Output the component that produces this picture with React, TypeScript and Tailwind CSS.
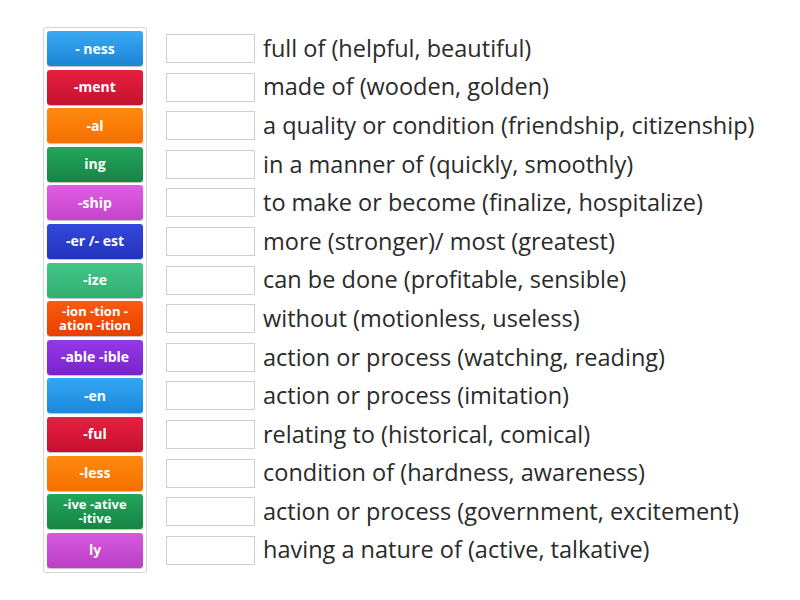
import React from "react";

type Row = { label: string[]; text: string };

const rows: Row[] = [
  { label: ["- ness"], text: "full of (helpful, beautiful)" },
  { label: ["-ment"], text: "made of (wooden, golden)" },
  { label: ["-al"], text: "a quality or condition (friendship, citizenship)" },
  { label: ["ing"], text: "in a manner of (quickly, smoothly)" },
  { label: ["-ship"], text: "to make or become (finalize, hospitalize)" },
  { label: ["-er /- est"], text: "more (stronger)/ most (greatest)" },
  { label: ["-ize"], text: "can be done (profitable, sensible)" },
  { label: ["-ion -tion -", "ation -ition"], text: "without (motionless, useless)" },
  { label: ["-able -ible"], text: "action or process (watching, reading)" },
  { label: ["-en"], text: "action or process (imitation)" },
  { label: ["-ful"], text: "relating to (historical, comical)" },
  { label: ["-less"], text: "condition of (hardness, awareness)" },
  { label: ["-ive -ative", "-itive"], text: "action or process (government, excitement)" },
  { label: ["ly"], text: "having a nature of (active, talkative)" },
];

// tile colours, top → bottom of the gradient
const tileBg = [
  "bg-linear-to-b from-[#3aa9f2] to-[#1b85d6]",
  "bg-linear-to-b from-[#e6203f] to-[#c5102f]",
  "bg-linear-to-b from-[#ff8a10] to-[#f56f00]",
  "bg-linear-to-b from-[#22a55a] to-[#178446]",
  "bg-linear-to-b from-[#df5ee2] to-[#c642cc]",
  "bg-linear-to-b from-[#3449dc] to-[#2232bd]",
  "bg-linear-to-b from-[#45c78a] to-[#2fae70]",
  "bg-linear-to-b from-[#fb5a10] to-[#e84000]",
  "bg-linear-to-b from-[#9438e6] to-[#7a22d0]",
  "bg-linear-to-b from-[#34a6f2] to-[#1b88dc]",
  "bg-linear-to-b from-[#e6203f] to-[#c5102f]",
  "bg-linear-to-b from-[#ff8a10] to-[#f56f00]",
  "bg-linear-to-b from-[#22a55a] to-[#178446]",
  "bg-linear-to-b from-[#d55ade] to-[#bb3ec6]",
];

export default function App() {
  return (
    <div className="flex h-[600px] w-[800px] bg-white pl-[43px] pt-[27px] font-['Open_Sans',sans-serif]">
      {/* tile column */}
      <div className="flex h-[546px] w-[104px] shrink-0 flex-col gap-[3.6px] rounded-[3px] border border-[#d6d6d6] p-[3px]">
        {rows.map((r, i) => (
          <div
            key={i}
            className={`flex h-[35px] shrink-0 flex-col items-center justify-center rounded-[3px] text-center font-bold text-white shadow-[0_1px_1px_rgba(0,0,0,0.25)] ${tileBg[i]}`}
          >
            {r.label.map((l, j) => (
              <span
                key={j}
                className={r.label.length > 1 ? "text-[13px] leading-[13.5px]" : "text-[14px] leading-[16px]"}
              >
                {l}
              </span>
            ))}
          </div>
        ))}
      </div>

      {/* answers */}
      <div className="ml-[19px] flex flex-col gap-[3.6px] pt-[4px]">
        {rows.map((r, i) => (
          <div key={i} className="flex h-[35px] items-center">
            <div className="h-[29px] w-[89px] shrink-0 border border-[#cfcfcf] bg-white" />
            <span className="ml-[8px] whitespace-nowrap text-[23.5px] leading-none text-[#2a2a2a]">
              {r.text}
            </span>
          </div>
        ))}
      </div>
    </div>
  );
}
